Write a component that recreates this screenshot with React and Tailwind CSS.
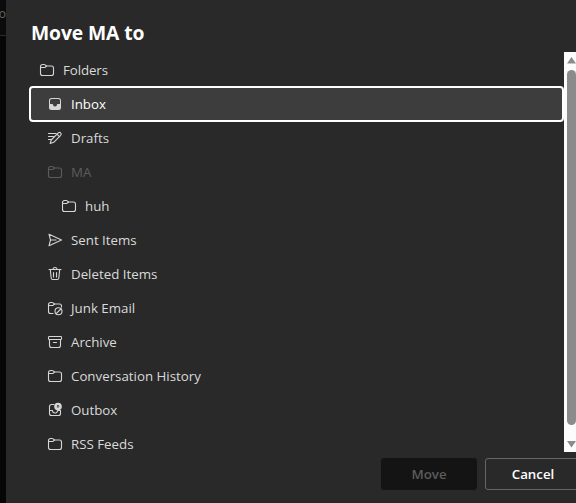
import React, { useState } from "react";

const Icon = ({ children }) => (
  <svg
    className="h-4 w-4 shrink-0 text-[#d6d6d6] in-disabled:text-[#5c5c5c]"
    viewBox="0 0 16 16"
    fill="none"
    stroke="currentColor"
    strokeWidth="1.1"
    strokeLinecap="round"
    strokeLinejoin="round"
  >
    {children}
  </svg>
);

const FolderIcon = () => (
  <Icon>
    <path d="M1.500 4.500A2 2 0 0 1 3.500 2.500h1.700a1.500 1.500 0 0 1 1 .4L7.500 4h5a2 2 0 0 1 2 2v5.500a2 2 0 0 1-2 2h-9a2 2 0 0 1-2-2z" />
    <path d="M1.500 5.500h3.700a1.500 1.500 0 0 0 1.100-.4L7.500 4" />
  </Icon>
);

const InboxIcon = () => (
  <Icon>
    <path
      d="M4.500 2h7A2.500 2.500 0 0 1 14 4.500v7a2.500 2.500 0 0 1-2.500 2.500h-7A2.500 2.500 0 0 1 2 11.500v-7A2.500 2.500 0 0 1 4.500 2zM3 4.500V8h2.500a.5.5 0 0 1 .5.5 2 2 0 0 0 4 0 .5.5 0 0 1 .5-.5H13V4.500A1.500 1.500 0 0 0 11.500 3h-7A1.500 1.500 0 0 0 3 4.500z"
      fill="currentColor"
      fillRule="evenodd"
      stroke="none"
    />
  </Icon>
);

const DraftsIcon = () => (
  <Icon>
    <path d="M1.500 3.500h7.500M1.500 6.500h5M1.500 9.500h2.500" />
    <path d="M11.300 2.900a1.700 1.700 0 0 1 2.400 2.400L6.700 12.300l-3.500 1.200 1-3.500z" />
    <path d="M10 4.200l2.400 2.400" />
  </Icon>
);

const SentIcon = () => (
  <Icon>
    <path d="M2 2.200L14.500 8 2 13.800 3.500 8z" />
    <path d="M3.500 8H9" />
  </Icon>
);

const DeletedIcon = () => (
  <Icon>
    <path d="M2 3.500h12M6 3.500a2 2 0 0 1 4 0" />
    <path d="M3.300 3.500l.9 8.700a1.500 1.500 0 0 0 1.500 1.300h4.600a1.500 1.500 0 0 0 1.500-1.300l.9-8.700" />
    <path d="M6.500 6.500v4.500M9.500 6.500v4.500" />
  </Icon>
);

const JunkIcon = () => (
  <Icon>
    <path d="M6 13.500H3.500a2 2 0 0 1-2-2v-7a2 2 0 0 1 2-2h1.700a1.500 1.500 0 0 1 1 .4L7.500 4h5a2 2 0 0 1 2 2v1" />
    <path d="M1.500 5.500h3.700a1.500 1.500 0 0 0 1.100-.4L7.500 4" />
    <circle cx="11.500" cy="11.300" r="3.500" />
    <path d="M9.200 13.600l4.600-4.600" />
  </Icon>
);

const ArchiveIcon = () => (
  <Icon>
    <rect x="1.500" y="2.500" width="13" height="3" rx="0.800" />
    <path d="M2.500 5.500V11.500a2 2 0 0 0 2 2h7a2 2 0 0 0 2-2V5.500M6.500 8.500h3" />
  </Icon>
);

const OutboxIcon = () => (
  <Icon>
    <path d="M7 2.500H4.500a2 2 0 0 0-2 2v7a2 2 0 0 0 2 2h7a2 2 0 0 0 2-2V9" />
    <path d="M2.500 8.500h3a2.500 2.500 0 0 0 5 0h3" />
    <circle cx="11" cy="4.500" r="3.800" fill="currentColor" stroke="none" />
    <path d="M11 5.600V3.400M10.100 4.200l.9-.9.900.9" stroke="#292929" strokeWidth="0.8" />
  </Icon>
);

const folders = [
  { name: "Inbox", icon: InboxIcon },
  { name: "Drafts", icon: DraftsIcon },
  { name: "MA", icon: FolderIcon, disabled: true },
  { name: "huh", icon: FolderIcon, nested: true },
  { name: "Sent Items", icon: SentIcon },
  { name: "Deleted Items", icon: DeletedIcon },
  { name: "Junk Email", icon: JunkIcon },
  { name: "Archive", icon: ArchiveIcon },
  { name: "Conversation History", icon: FolderIcon },
  { name: "Outbox", icon: OutboxIcon },
  { name: "RSS Feeds", icon: FolderIcon },
];

const FolderRow = ({ folder, selected, onSelect }) => {
  const FolderGlyph = folder.icon;
  let style = "text-[#dadada]";
  if (folder.disabled) style = "text-[#5c5c5c]";
  if (selected)
    style = "rounded-[3px] bg-[#3d3d3d] text-white outline-2 -outline-offset-1 outline-white";

  return (
    <button
      className={`flex h-[34px] w-full shrink-0 items-center gap-2 text-left ${
        folder.nested ? "pl-[31px]" : "pl-[17px]"
      } ${style}`}
      disabled={folder.disabled}
      onClick={() => onSelect(folder.name)}
    >
      <FolderGlyph />
      <span className={selected ? "pt-0.5 font-medium" : "pt-0.5"}>
        {folder.name}
      </span>
    </button>
  );
};

const Scrollbar = () => (
  <div className="flex w-3 shrink-0 flex-col items-end bg-[#fcfcfc] text-[#8b8b8b]">
    <svg className="h-[18px] w-[9px]" viewBox="0 0 9 18" fill="currentColor">
      <path d="M4.500 5L9 11.500H0z" />
    </svg>
    <div className="h-[355px] w-[9px] rounded-full bg-[#8b8b8b]" />
    <svg className="h-[27px] w-[9px]" viewBox="0 0 9 27" fill="currentColor">
      <path d="M0 16h9l-4.500 6.500z" />
    </svg>
  </div>
);

const App = () => {
  const [selected, setSelected] = useState("Inbox");

  return (
    <div className="flex h-[503px] w-[576px] overflow-hidden bg-[#292929] font-['Open_Sans',sans-serif] text-[13.3px] text-white">
      <div className="w-1.5 shrink-0 overflow-hidden bg-[#060606]">
        <div className="flex h-9 items-center justify-end border-b border-[#292929] bg-[#0b0b0b] pb-2 text-[12px] text-[#666666]">
          o
        </div>
      </div>
      <div className="flex min-w-0 flex-1 flex-col">
        <h1 className="h-[52px] shrink-0 pt-[19px] pl-[25px] text-[19.3px] leading-7 font-bold tracking-[-0.1px]">
          Move MA to
        </h1>
        <div className="flex h-[400px] shrink-0 overflow-hidden">
          <div className="flex flex-1 flex-col pt-px pr-px pl-6">
            <div className="flex h-[34px] shrink-0 items-center gap-2 pl-[9px] text-[#dadada]">
              <FolderIcon />
              <span className="pt-0.5 tracking-[-0.1px]">Folders</span>
            </div>
            {folders.map((folder) => (
              <FolderRow
                key={folder.name}
                folder={folder}
                selected={folder.name === selected}
                onSelect={setSelected}
              />
            ))}
          </div>
          <Scrollbar />
        </div>
        <div className="flex shrink-0 gap-2 pt-1.5 pl-[375px] font-semibold">
          <button className="h-8 w-24 shrink-0 rounded-[3px] bg-[#141414] pt-0.5 text-[#5c5c5c]">
            Move
          </button>
          <button className="h-8 w-24 shrink-0 rounded-[3px] border border-[#666666] pt-0.5">
            Cancel
          </button>
        </div>
      </div>
    </div>
  );
};

export default App;
